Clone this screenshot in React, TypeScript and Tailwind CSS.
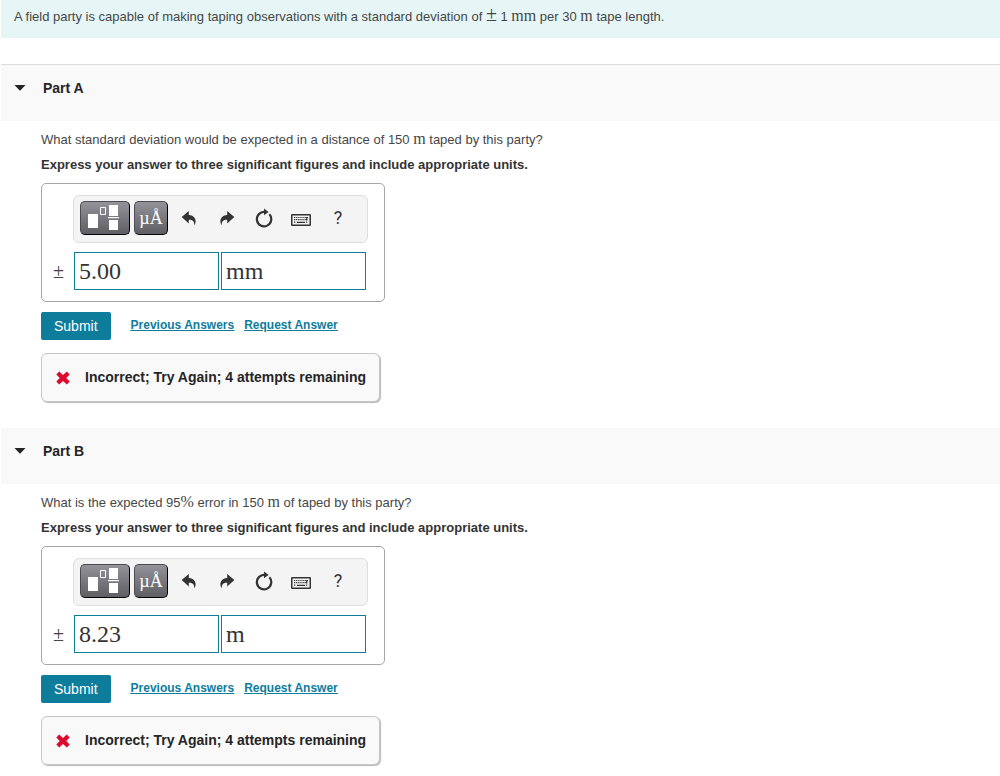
import type { ReactNode } from 'react'

type Part = {
  id: string
  title: string
  question: ReactNode
  value: string
  units: string
}

const parts: Part[] = [
  {
    id: 'a',
    title: 'Part A',
    question: (
      <>
        What standard deviation would be expected in a distance of 150 <Unit>m</Unit> taped by this
        party?
      </>
    ),
    value: '5.00',
    units: 'mm',
  },
  {
    id: 'b',
    title: 'Part B',
    question: (
      <>
        What is the expected 95<Unit>%</Unit> error in 150 <Unit>m</Unit> of taped by this party?
      </>
    ),
    value: '8.23',
    units: 'm',
  },
]

export default function App() {
  return (
    <main className="bg-white pl-px font-['Liberation_Sans',Arial,sans-serif] text-[13px] text-[#464646]">
      <p className="bg-[#e6f6f6] px-[13px] pt-1 pb-[11px] leading-5">
        A field party is capable of making taping observations with a standard deviation of{' '}
        <span className="font-['Liberation_Serif','Times_New_Roman',serif] text-xl leading-none">
          ±
        </span>{' '}
        1 <Unit>mm</Unit> per 30 <Unit>m</Unit> tape length.
      </p>
      <div className="mt-[26px] border-t border-[#dcdcdc]">
        {parts.map((part) => (
          <PartSection key={part.id} part={part} />
        ))}
      </div>
    </main>
  )
}

function PartSection({ part }: { part: Part }) {
  return (
    <section>
      <header className="bg-[#f9f9f9] px-3 pt-[13px] pb-[23px]">
        <button type="button" className="flex items-center gap-4 text-[#252525]">
          <svg viewBox="0 0 14 8" className="h-2 w-3.5" aria-hidden="true">
            <path d="M1.5 1h11L7.6 6.2q-.6.6-1.2 0z" fill="currentColor" />
          </svg>
          <h2 className="text-sm leading-5 font-bold">{part.title}</h2>
        </button>
      </header>
      <div className="px-10 pt-[9px] pb-[26px]">
        <p className="leading-5">{part.question}</p>
        <p className="mt-[5px] leading-5 font-bold text-[#333]">
          Express your answer to three significant figures and include appropriate units.
        </p>
        <form onSubmit={(event) => event.preventDefault()}>
          <div className="mt-2 w-fit max-w-full rounded-[5px] border border-[#a6a6a6] py-[11px] pr-4 pl-2.5">
            <Toolbar />
            <AnswerFields part={part} />
          </div>
          <div className="mt-2.5 flex items-center">
            <button
              type="submit"
              className="h-7 rounded-xs bg-[#0e7c9b] px-[13px] text-sm text-white"
            >
              Submit
            </button>
            <div className="ml-5 flex gap-2.5 pb-0.5 text-xs font-bold text-[#0e7c9b] underline">
              <a href="#previous">Previous Answers</a>
              <a href="#request">Request Answer</a>
            </div>
          </div>
        </form>
        <div
          role="status"
          className="mt-[13px] flex w-fit items-center gap-[15px] rounded-md border border-[#c6c6c6] bg-[#f9f9f9] py-[13px] pr-[13px] pl-3.5 text-sm leading-[21px] font-bold text-[#252525] shadow-[1px_1px_1px_#b8b8b8]"
        >
          <svg viewBox="0 0 14 14" className="size-3.5" aria-hidden="true">
            <path
              d="M3.2.6 7 4 10.8.6 13.7 3.6 10.3 7 13.7 10.4 10.8 13.4 7 10 3.2 13.4.3 10.4 3.7 7 .3 3.6z"
              fill="#dc0a2d"
            />
          </svg>
          Incorrect; Try Again; 4 attempts remaining
        </div>
      </div>
    </section>
  )
}

function Toolbar() {
  const dark =
    'flex h-[34px] items-center justify-center rounded-[5px] border border-b-black border-r-black border-t-[#4b4b50] border-l-[#4b4b50] bg-linear-to-b from-[#94939b] to-[#5f5e63] text-white'
  const plain = 'flex h-[34px] items-center justify-center text-[#333]'

  return (
    <div
      role="toolbar"
      aria-label="Equation tools"
      className="ml-[21px] flex h-12 items-center rounded-md border border-[#dedede] bg-[#f4f4f4] px-1.5 pb-0.5"
    >
      <button type="button" aria-label="Templates" className={`${dark} w-[50px] pr-0.5`}>
        <svg viewBox="0 0 32 26" className="h-[26px] w-8" aria-hidden="true">
          <path d="M0 9h10v14H0zM21 0h9v11h-9zM21 15h9v10h-9zM20 12h11v1.2H20z" fill="currentColor" />
          <path d="M12.5 2.5h5v7h-5z" fill="none" stroke="currentColor" />
        </svg>
      </button>
      <button
        type="button"
        aria-label="Units"
        className={`${dark} ml-1 w-[34px] font-['Liberation_Serif','Times_New_Roman',serif] text-lg`}
      >
        µÅ
      </button>
      <button type="button" aria-label="Undo" className={`${plain} ml-[9px] w-6`}>
        <svg viewBox="0 0 16 18" className="h-[18px] w-4" aria-hidden="true">
          <ArrowPath />
        </svg>
      </button>
      <button type="button" aria-label="Redo" className={`${plain} ml-3.5 w-6`}>
        <svg viewBox="0 0 16 18" className="h-[18px] w-4 -scale-x-100" aria-hidden="true">
          <ArrowPath />
        </svg>
      </button>
      <button type="button" aria-label="Reset" className={`${plain} ml-[13px] w-6`}>
        <svg viewBox="0 0 18 20" className="h-5 w-[18px]" aria-hidden="true">
          <path
            d="M10 4A7.2 7.2 0 1 0 14.4 6.3"
            fill="none"
            stroke="currentColor"
            strokeWidth="2.2"
          />
          <path d="M9 .4l4.6 3.6L9 7.2z" fill="currentColor" />
        </svg>
      </button>
      <button type="button" aria-label="Keyboard shortcuts" className={`${plain} ml-[13px] w-6`}>
        <svg viewBox="0 0 20 12" className="mt-1 h-3 w-5" aria-hidden="true">
          <rect x=".75" y=".75" width="18.5" height="10.5" rx=".5" fill="none" stroke="currentColor" strokeWidth="1.5" />
          <path d="M3 3.5h14M3 5.7h13M3 8.2h2M15 8.2h2" stroke="currentColor" strokeWidth="1.2" strokeDasharray="1.3 .8" />
          <path d="M6 8.4h8M15.8 3v3.5" stroke="currentColor" strokeWidth="1.3" />
        </svg>
      </button>
      <button
        type="button"
        aria-label="Help"
        className={`${plain} ml-[13px] w-6 font-[Roboto,sans-serif] text-lg`}
      >
        ?
      </button>
    </div>
  )
}

function ArrowPath() {
  return (
    <path
      d="M.7 8 7.8 1.9v4c4.4.1 6.9 3 6.8 6.3 0 1.6-.6 3-1.3 4.2.1-3.9-1.5-5.6-5.5-5.6v3.6z"
      fill="currentColor"
    />
  )
}

function AnswerFields({ part }: { part: Part }) {
  const field =
    "h-[38px] w-[145px] min-w-0 border border-[#0e7c9b] px-1 font-['Liberation_Serif','Times_New_Roman',serif] text-2xl text-[#333] outline-none"

  return (
    <div className="mt-[9px] flex items-center pr-0.5">
      <label
        htmlFor={`value-${part.id}`}
        className="w-[22px] pl-px font-['Liberation_Serif','Times_New_Roman',serif] text-xl"
      >
        ±
      </label>
      <input id={`value-${part.id}`} className={field} defaultValue={part.value} />
      <input
        aria-label="Units"
        className={`${field} ml-0.5`}
        defaultValue={part.units}
      />
    </div>
  )
}

function Unit({ children }: { children: ReactNode }) {
  return (
    <span className="font-['Liberation_Serif','Times_New_Roman',serif] text-base leading-none">
      {children}
    </span>
  )
}
